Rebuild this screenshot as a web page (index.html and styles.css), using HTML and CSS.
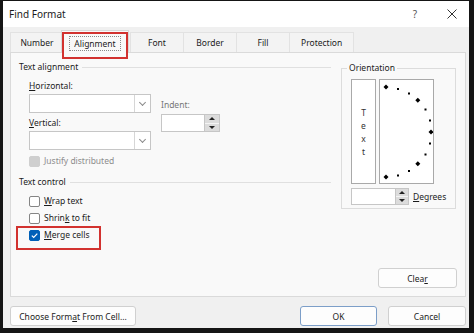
FILE: index.html
```html
<!DOCTYPE html>
<html lang="en">
<head>
    <meta charset="UTF-8">
    <title>Find Format</title>
    <link rel="stylesheet" href="styles.css">
</head>
<body>
    <div class="window">
        <div class="titlebar">
            <span class="title">Find Format</span>
            <span class="help">?</span>
            <span class="close">
                <svg width="10" height="10" viewBox="0 0 10 10"><path d="M0.5 0.5L9.5 9.5M9.5 0.5L0.5 9.5" stroke="#333" stroke-width="1" fill="none"/></svg>
            </span>
        </div>
        <div class="dialog">
            <div class="tabs">
                <div class="tab">Number</div>
                <div class="tab active"><span class="focus">Alignment</span></div>
                <div class="tab">Font</div>
                <div class="tab">Border</div>
                <div class="tab">Fill</div>
                <div class="tab">Protection</div>
            </div>
            <div class="panel">
                <div class="left">
                    <div class="group-head">Text alignment</div>
                    <div class="align-grid">
                        <div class="combos">
                            <div class="label"><u>H</u>orizontal:</div>
                            <div class="combo"><span class="arrow"></span></div>
                            <div class="label label-gap"><u>V</u>ertical:</div>
                            <div class="combo"><span class="arrow"></span></div>
                        </div>
                        <div class="indent">
                            <div class="label muted">Indent:</div>
                            <div class="spin spin-indent">
                                <div class="spin-input"></div>
                                <div class="spin-btns"><span class="up"></span><span class="down"></span></div>
                            </div>
                        </div>
                    </div>
                    <div class="check disabled justify"><span class="box"></span>Justify distributed</div>
                    <div class="group-head control-head">Text control</div>
                    <div class="check wrap"><span class="box"></span><span><u>W</u>rap text</span></div>
                    <div class="check"><span class="box"></span><span>Shrin<u>k</u> to fit</span></div>
                    <div class="check checked merge">
                        <span class="box">
                            <svg width="9" height="9" viewBox="0 0 9 9"><path d="M1.8 4.6L3.7 6.4L7.3 2.6" stroke="#fff" stroke-width="1.2" fill="none"/></svg>
                        </span>
                        <span><u>M</u>erge cells</span>
                    </div>
                </div>
                <div class="right">
                    <div class="orient">
                        <div class="orient-label">Orientation</div>
                        <div class="orient-boxes">
                            <div class="text-box">
                                <span>T</span><span>e</span><span>x</span><span>t</span>
                            </div>
                            <div class="arc-box">
                                <svg width="53" height="103" viewBox="0 0 53 103">
                                    <g fill="#000">
                                        <path d="M6 4.5L8.5 7L6 9.5L3.5 7Z"/>
                                        <path d="M37.8 17.7L40.3 20.2L37.8 22.7L35.3 20.2Z"/>
                                        <path d="M51 49.5L53.5 52L51 54.5L48.5 52Z"/>
                                        <path d="M37.8 81.3L40.3 83.8L37.8 86.3L35.3 83.8Z"/>
                                        <path d="M6 94.5L8.5 97L6 99.5L3.5 97Z"/>
                                        <rect x="17" y="8" width="2" height="2"/>
                                        <rect x="28" y="12.5" width="2" height="2"/>
                                        <rect x="44.5" y="28.5" width="2" height="2"/>
                                        <rect x="49" y="39.5" width="2" height="2"/>
                                        <rect x="49" y="62.5" width="2" height="2"/>
                                        <rect x="44.5" y="73.5" width="2" height="2"/>
                                        <rect x="28" y="90" width="2" height="2"/>
                                        <rect x="17" y="94.5" width="2" height="2"/>
                                    </g>
                                </svg>
                            </div>
                        </div>
                        <div class="degrees">
                            <div class="spin spin-deg">
                                <div class="spin-input"></div>
                                <div class="spin-btns"><span class="up"></span><span class="down"></span></div>
                            </div>
                            <span class="deg-label"><u>D</u>egrees</span>
                        </div>
                    </div>
                    <button class="btn clear">Clea<u>r</u></button>
                </div>
            </div>
            <div class="footer">
                <button class="btn choose">Choose Form<u>a</u>t From Cell...</button>
                <span class="spacer"></span>
                <button class="btn ok">OK</button>
                <button class="btn cancel">Cancel</button>
            </div>
        </div>
    </div>
</body>
</html>
```

FILE: styles.css
```css
body {
    margin: 0;
    background: #151515;
    font-family: 'Noto Sans', 'Open Sans', sans-serif;
    font-size: 8.5px;
    color: #1b1b1b;
}
.window {
    margin: 1px 5px 0 3px;
    height: 327px;
    background: #f0f0f0;
    display: flex;
    flex-direction: column;
}
.titlebar {
    height: 26px;
    background: #fff;
    display: flex;
    align-items: center;
    padding: 0 5px 0 6px;
}
.title {
    flex: 1;
    font-size: 10px;
}
.help {
    width: 12px;
    text-align: center;
    font-size: 10px;
    color: #555;
    margin-right: 19px;
}
.close {
    width: 24px;
    display: flex;
    justify-content: center;
}
.dialog {
    flex: 1;
    padding: 3px 3px 0 7px;
}
.tabs {
    display: flex;
    align-items: flex-end;
    height: 22px;
}
.tab {
    height: 20px;
    line-height: 19px;
    box-sizing: border-box;
    min-width: 54px;
    padding: 0 9px;
    text-align: center;
    border: 1px solid #e2e2e2;
    border-bottom: none;
    margin-right: -1px;
    background: #f3f3f3;
}
.tab:last-child {
    padding: 0 11px;
}
.tab.active {
    position: relative;
    z-index: 2;
    height: 23px;
    margin: 0 1px -1px -2px;
    padding: 0 6px;
    background: #f9f9f9;
    border-color: #d9d9d9;
    display: flex;
    align-items: center;
    justify-content: center;
    min-width: 68px;
}
.tab.active::after {
    content: "";
    position: absolute;
    left: 0;
    right: 0;
    top: 1px;
    bottom: -6px;
    border: 2px solid #d2322f;
}
.focus {
    border: 1px dotted #8a8a8a;
    padding: 0 4px;
    line-height: 13px;
    margin-top: 2px;
}
.panel {
    height: 245px;
    box-sizing: border-box;
    background: #f9f9f9;
    border: 1px solid #dadada;
    padding: 7px 8px 8px 8px;
    display: grid;
    grid-template-columns: 312px 116px;
    column-gap: 10px;
}
.group-head {
    display: flex;
    align-items: center;
    line-height: 14px;
}
.group-head::after {
    content: "";
    flex: 1;
    height: 1px;
    background: #e0e0e0;
    margin-left: 4px;
}
.label {
    line-height: 14px;
}
.muted {
    color: #767676;
}
.align-grid {
    display: flex;
    margin-top: 5px;
    padding-left: 10px;
}
.combo {
    width: 122px;
    height: 19px;
    box-sizing: border-box;
    border: 1px solid #c6c6c6;
    background: #fff;
    margin-top: 1px;
    display: flex;
    justify-content: flex-end;
}
.label-gap {
    margin-top: 3px;
}
.arrow {
    width: 15px;
    border-left: 1px solid #d6d6d6;
    display: flex;
    align-items: center;
    justify-content: center;
}
.arrow::before {
    content: "";
    width: 4px;
    height: 4px;
    border-right: 1px solid #8a8a8a;
    border-bottom: 1px solid #8a8a8a;
    transform: rotate(45deg);
    margin-top: -3px;
}
.indent {
    margin-left: 10px;
    padding-top: 19px;
}
.spin {
    display: flex;
    margin-top: 2px;
}
.spin-input {
    background: #fff;
    border: 1px solid #c6c6c6;
    box-sizing: border-box;
}
.spin-indent .spin-input {
    width: 44px;
    height: 18px;
}
.spin-btns {
    display: flex;
    flex-direction: column;
    background: #dcdcdc;
    border: 1px solid #c6c6c6;
    border-left: none;
    box-sizing: border-box;
}
.spin-indent .spin-btns {
    width: 15px;
    height: 18px;
}
.spin-btns span {
    flex: 1;
    display: flex;
    align-items: center;
    justify-content: center;
}
.spin-btns .up {
    border-bottom: 1px solid #f4f4f4;
}
.spin-btns .up::before {
    content: "";
    border: 3px solid transparent;
    border-bottom: 3px solid #222;
    border-top: none;
}
.spin-btns .down::before {
    content: "";
    border: 3px solid transparent;
    border-top: 3px solid #222;
    border-bottom: none;
}
.check {
    display: flex;
    align-items: center;
    gap: 4px;
    line-height: 14px;
    padding-left: 10px;
    margin-top: 3px;
    position: relative;
}
.box {
    width: 11px;
    height: 11px;
    box-sizing: border-box;
    border: 1px solid #858585;
    border-radius: 2px;
    background: #fff;
    display: flex;
    align-items: center;
    justify-content: center;
}
.check.disabled {
    color: #8d8d8d;
}
.check.disabled .box {
    background: #cfcfcf;
    border-color: #cfcfcf;
}
.check.checked .box {
    background: #0060b8;
    border-color: #0060b8;
}
.justify {
    margin-top: 4px;
}
.control-head {
    margin-top: 7px;
}
.wrap {
    margin-top: 5px;
}
.merge::after {
    content: "";
    position: absolute;
    left: -3px;
    top: -2px;
    width: 85px;
    height: 24px;
    box-sizing: border-box;
    border: 2px solid #d2322f;
}
.right {
    display: flex;
    flex-direction: column;
    align-items: flex-end;
}
.orient {
    width: 115px;
    align-self: flex-start;
    margin-top: 8px;
    border: 1px solid #dcdcdc;
    box-sizing: border-box;
    padding: 0 0 3px 9px;
}
.orient-label {
    width: fit-content;
    margin: -8px 0 0 -4px;
    padding: 0 2px;
    line-height: 14px;
    background: #f9f9f9;
}
.orient-boxes {
    display: flex;
    gap: 3px;
    margin-top: 4px;
}
.text-box {
    width: 25px;
    height: 105px;
    box-sizing: border-box;
    border: 1px solid #a9a9a9;
    background: #fff;
    display: flex;
    flex-direction: column;
    align-items: center;
    justify-content: center;
    line-height: 13px;
    color: #333;
}
.arc-box {
    width: 55px;
    height: 105px;
    box-sizing: border-box;
    border: 1px solid #a9a9a9;
    background: #fff;
}
.arc-box svg {
    display: block;
}
.degrees {
    display: flex;
    align-items: center;
    margin-top: 4px;
}
.spin-deg {
    margin-top: 0;
}
.spin-deg .spin-input {
    width: 45px;
    height: 17px;
}
.spin-deg .spin-btns {
    width: 13px;
    height: 17px;
}
.deg-label {
    margin-left: 4px;
    line-height: 14px;
}
.btn {
    height: 20px;
    box-sizing: border-box;
    background: #fdfdfd;
    border: 1px solid #d0d0d0;
    border-radius: 3px;
    font-family: inherit;
    font-size: 8.5px;
    color: #1b1b1b;
    padding: 0;
}
.clear {
    width: 79px;
    margin-top: auto;
}
.footer {
    display: flex;
    margin-top: 9px;
}
.spacer {
    flex: 1;
}
.choose {
    width: 126px;
}
.ok {
    width: 77px;
    border-color: #7c9ec8;
    margin-right: 11px;
}
.cancel {
    width: 78px;
}
```
